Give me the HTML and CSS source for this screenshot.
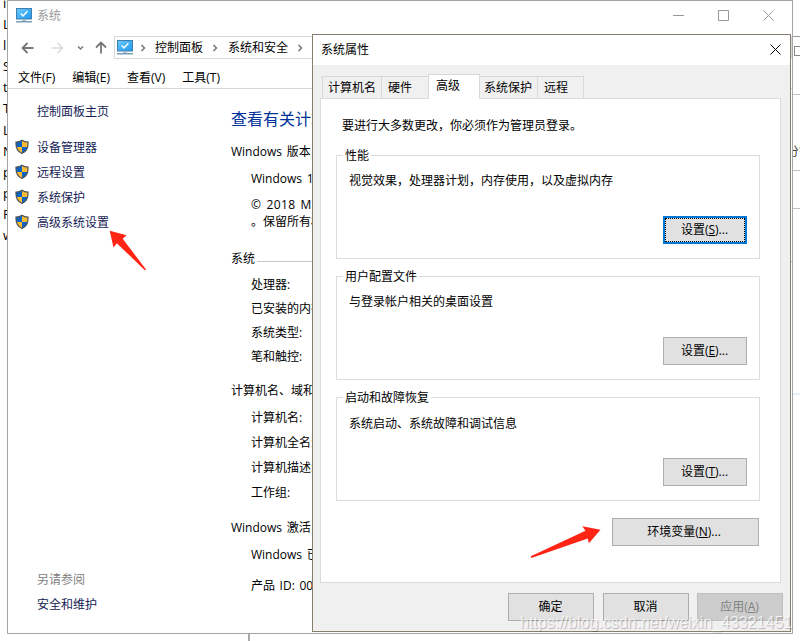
FILE: index.html
```html
<!DOCTYPE html>
<html lang="zh-CN">
<head>
  <meta charset="UTF-8" />
  <meta name="viewport" content="width=device-width, initial-scale=1.0" />
  <title>系统</title>
  <link rel="stylesheet" href="styles.css">
</head>
<body>
  <!-- icons -->
  <svg class="defs" width="0" height="0">
    <defs>
      <linearGradient id="screen" x1="0" y1="0" x2="1" y2="1">
        <stop offset="0" stop-color="#6cc9fb" />
        <stop offset="1" stop-color="#1c98ee" />
      </linearGradient>
      <symbol id="monitor" viewBox="0 0 16 15">
        <rect x="0.5" y="0.5" width="15" height="10.5" fill="url(#screen)" stroke="#3f7fb0" />
        <path d="M4.8 5.6l2.2 2.3 4.4-4.6" fill="none" stroke="#fff" stroke-width="1.5" />
        <path d="M6 11.5h4v1.5H6z" fill="#a8bccb" />
        <path d="M0 13h16v1.5H0z" fill="#7d9db5" />
      </symbol>
      <clipPath id="shield-clip">
        <path d="M7 1.2C8.7 2.5 10.7 3 13 3.1c.3 5.5-.9 9.4-6 11.4C1.9 12.5.7 8.6 1 3.1 3.3 3 5.3 2.5 7 1.2z" />
      </clipPath>
      <symbol id="shield" viewBox="0 0 14 16">
        <g clip-path="url(#shield-clip)">
          <path d="M0 0h7v8H0z" fill="#0b63c4" />
          <path d="M7 0h7v8H7z" fill="#fdbb33" />
          <path d="M0 8h7v8H0z" fill="#fdbb33" />
          <path d="M7 8h7v8H7z" fill="#0b63c4" />
        </g>
        <path d="M7 1.2C8.7 2.5 10.7 3 13 3.1c.3 5.5-.9 9.4-6 11.4C1.9 12.5.7 8.6 1 3.1 3.3 3 5.3 2.5 7 1.2z" fill="none" stroke="#4c5459" stroke-width="1.2" />
      </symbol>
      <symbol id="chevron" viewBox="0 0 6 8">
        <path d="M1.5 1l3 3-3 3" fill="none" stroke="#777" stroke-width="1.5" />
      </symbol>
      <symbol id="close" viewBox="0 0 11 11">
        <path d="M.5.5l10 10M10.5.5l-10 10" fill="none" stroke="currentColor" />
      </symbol>
    </defs>
  </svg>

  <!-- document behind the windows -->
  <div class="backdrop-left">
    <p>in</p><p>L</p><p>li</p><p>S</p><p>t</p><p>T</p><p>L</p><p>N</p><p>p</p><p>p</p><p>R</p><p>w</p>
  </div>
  <div class="backdrop-right">
    <div class="strip strip-top"></div>
    <div class="strip strip-tools"><i></i></div>
    <div class="strip strip-head"></div>
    <div class="strip strip-text">分钟</div>
    <div class="strip strip-blank"></div>
    <div class="strip strip-mark"></div>
  </div>
  <div class="backdrop-bottom"></div>

  <div class="window">
    <header class="titlebar">
      <svg width="16" height="15"><use href="#monitor" /></svg>
      <span class="title">系统</span>
      <div class="controls">
        <svg width="11" height="11"><path d="M0 5.5h11" stroke="#999" /></svg>
        <svg width="11" height="11"><path d="M.5.5h10v10H.5z" fill="none" stroke="#999" /></svg>
        <svg width="11" height="11"><use href="#close" /></svg>
      </div>
    </header>

    <nav class="navbar">
      <svg class="back" width="13" height="12" viewBox="0 0 13 12"><path d="M12.5 6H1.5M6.5 1l-5 5 5 5" fill="none" stroke="#777" stroke-width="1.8" /></svg>
      <svg class="forward" width="13" height="12" viewBox="0 0 13 12"><path d="M.5 6h11M6.500 1l5 5-5 5" fill="none" stroke="#ddd" stroke-width="1.6" /></svg>
      <svg class="recent" width="7" height="6" viewBox="0 0 7 6"><path d="M1 1.5L3.5 4 6 1.5" fill="none" stroke="#777" stroke-width="1.5" /></svg>
      <svg class="up" width="12" height="13" viewBox="0 0 12 13"><path d="M6 12.5v-11M1 6.500l5-5 5 5" fill="none" stroke="#777" stroke-width="1.8" /></svg>
      <div class="address">
        <svg width="16" height="15"><use href="#monitor" /></svg>
        <svg class="sep" width="6" height="8"><use href="#chevron" /></svg>
        <span>控制面板</span>
        <svg class="sep" width="6" height="8"><use href="#chevron" /></svg>
        <span>系统和安全</span>
        <svg class="sep" width="6" height="8"><use href="#chevron" /></svg>
      </div>
    </nav>

    <div class="menubar">
      <span>文件(F)</span>
      <span>编辑(E)</span>
      <span>查看(V)</span>
      <span>工具(T)</span>
    </div>

    <div class="content">
      <aside class="sidebar">
        <a class="home">控制面板主页</a>
        <ul>
          <li><svg width="14" height="16"><use href="#shield" /></svg>设备管理器</li>
          <li><svg width="14" height="16"><use href="#shield" /></svg>远程设置</li>
          <li><svg width="14" height="16"><use href="#shield" /></svg>系统保护</li>
          <li><svg width="14" height="16"><use href="#shield" /></svg>高级系统设置</li>
        </ul>
        <div class="see-also">
          <p>另请参阅</p>
          <a>安全和维护</a>
        </div>
      </aside>

      <main class="info">
        <h1>查看有关计算机</h1>
        <section class="edition">
          <h2>Windows 版本</h2>
          <p>Windows 10</p>
          <p class="copy"><span>© 2018 Mi</span><br>。保留所有权</p>
        </section>
        <section class="system">
          <h2 class="ruled">系统</h2>
          <p>处理器:</p>
          <p>已安装的内存</p>
          <p>系统类型:</p>
          <p>笔和触控:</p>
        </section>
        <section class="computer">
          <h2>计算机名、域和</h2>
          <p>计算机名:</p>
          <p>计算机全名:</p>
          <p>计算机描述:</p>
          <p>工作组:</p>
        </section>
        <section class="activation">
          <h2>Windows 激活</h2>
          <p>Windows 已</p>
          <p>产品 ID: 00</p>
        </section>
      </main>
    </div>
  </div>

  <div class="dialog">
    <header class="dialog-title">
      <span>系统属性</span>
      <svg width="11" height="11"><use href="#close" /></svg>
    </header>

    <div class="dialog-body">
      <div class="tabs">
        <span class="tab tab-name">计算机名</span>
        <span class="tab tab-hardware">硬件</span>
        <span class="tab tab-advanced active">高级</span>
        <span class="tab tab-protect">系统保护</span>
        <span class="tab tab-remote">远程</span>
      </div>

      <div class="panel">
        <p class="notice">要进行大多数更改，你必须作为管理员登录。</p>
        <div class="group">
          <span class="legend">性能</span>
          <p>视觉效果，处理器计划，内存使用，以及虚拟内存</p>
          <button class="btn focused">设置(<u>S</u>)...</button>
        </div>
        <div class="group">
          <span class="legend">用户配置文件</span>
          <p>与登录帐户相关的桌面设置</p>
          <button class="btn">设置(<u>E</u>)...</button>
        </div>
        <div class="group startup">
          <span class="legend">启动和故障恢复</span>
          <p>系统启动、系统故障和调试信息</p>
          <button class="btn">设置(<u>T</u>)...</button>
        </div>
        <button class="btn env">环境变量(<u>N</u>)...</button>
      </div>

      <footer class="actions">
        <button class="btn ok">确定</button>
        <button class="btn">取消</button>
        <button class="btn" disabled>应用(<u>A</u>)</button>
      </footer>
    </div>
  </div>

  <!-- red pointers -->
  <svg class="marks" width="800" height="641">
    <path d="M109.700 230.700L126.500 235.200 122.700 238.700 146.200 269.800 144.600 269.900 116.800 243.200 113.500 247.600z" fill="#ff2414" />
    <path d="M600.500 529.800L582.300 526.200 585.500 530.700 530.800 556.300 531.300 558 587.800 538.600 588.900 543.300z" fill="#ff2414" />
  </svg>
  <div class="watermark">https://blog.csdn.net/weixin_43321451</div>
</body>
</html>
```
FILE: styles.css
```css
* {
  box-sizing: border-box;
  margin: 0;
  padding: 0;
}

body {
  position: relative;
  width: 800px;
  height: 641px;
  overflow: hidden;
  background: #fff;
  color: #000;
  font-family: "Open Sans", "Noto Sans CJK SC", sans-serif;
  font-size: 12px;
  line-height: 18px;
}

svg {
  display: block;
  flex: none;
}

.defs {
  position: absolute;
}

/* background document */
.backdrop-left {
  position: absolute;
  left: 3px;
  top: -7px;
  width: 12px;
  font-size: 13px;
  line-height: 21.1px;
}

.backdrop-right {
  position: absolute;
  left: 792px;
  top: 0;
  width: 8px;
  overflow: hidden;
}

.strip {
  border-bottom: 1px solid #c0c0c0;
}

.strip-top {
  height: 37px;
  border-color: #999;
}

.strip-tools {
  height: 58px;
  padding: 9px 0 0 2px;
}

.strip-tools i {
  display: block;
  width: 10px;
  height: 10px;
  border: 1px solid #888;
}

.strip-head {
  height: 50px;
  border: none;
}

.strip-text {
  height: 26px;
  margin-left: -5px;
  color: #444;
  white-space: nowrap;
  line-height: 13px;
}

.strip-blank {
  height: 38px;
}

.strip-mark {
  height: 186px;
  border-bottom: 2px solid #e3efff;
}

.backdrop-bottom {
  position: absolute;
  left: 248px;
  top: 634px;
  width: 2px;
  height: 7px;
  background: #aaa;
}

/* system window */
.window {
  position: absolute;
  left: 7px;
  top: 0;
  width: 786px;
  height: 634px;
  display: flex;
  flex-direction: column;
  background: #fff;
  border: 1px solid #a5a5a5;
}

.titlebar {
  display: flex;
  align-items: center;
  height: 29px;
  padding: 0 18px 0 8px;
}

.title {
  margin-left: 5px;
  color: #999;
}

.controls {
  display: flex;
  gap: 34px;
  margin-left: auto;
  color: #999;
}

.navbar {
  display: flex;
  align-items: center;
  height: 35px;
  padding-left: 13px;
}

.forward {
  margin-left: 17px;
}

.recent {
  margin-left: 13px;
}

.up {
  margin-left: 11px;
}

.address {
  flex: 1;
  display: flex;
  align-items: center;
  height: 23px;
  margin-left: 7px;
  padding-left: 2px;
  border: 1px solid #d9d9d9;
}

.sep {
  margin: 0 9px 0 7px;
}

span + .sep {
  margin: 0 10px 0 9px;
}

.menubar {
  display: flex;
  gap: 17px;
  height: 24px;
  padding: 4px 0 0 10px;
  border-bottom: 1px solid #d5d5d5;
}

.content {
  flex: 1;
  display: flex;
}

.sidebar {
  display: flex;
  flex-direction: column;
  width: 223px;
  padding: 14px 0 16px 29px;
  color: #151c55;
}

.sidebar ul {
  margin: 14px 0 0 -22px;
  list-style: none;
}

.sidebar li {
  display: flex;
  align-items: center;
  gap: 8px;
  height: 25px;
}

.sidebar li svg {
  margin-top: -2px;
}

.see-also {
  margin-top: auto;
  line-height: 25px;
}

.see-also p {
  color: #808080;
}

.info {
  flex: 1;
  padding-top: 18px;
  white-space: nowrap;
  word-spacing: 1.5px;
}

.info h1 {
  color: #003399;
  font-size: 16px;
  font-weight: 400;
  line-height: 24px;
}

.info h2 {
  font-size: 12px;
  font-weight: 400;
}

.info p {
  padding-left: 20px;
  line-height: 24px;
}

.edition {
  margin-top: 12px;
}

.edition h2 {
  margin-bottom: 6px;
}

.info .copy {
  margin-top: 5px;
  line-height: 17px;
}

.copy span {
  letter-spacing: 0.4px;
}

.system {
  margin-top: 20px;
}

.ruled {
  display: flex;
  align-items: center;
  gap: 2px;
  margin-bottom: 5px;
}

.ruled::after {
  content: "";
  flex: 1;
  height: 1px;
  margin-top: 4px;
  background: #c8c8c8;
}

.computer {
  margin-top: 13px;
}

.computer h2 {
  margin-bottom: 5px;
}

.computer p {
  line-height: 25px;
}

.activation {
  margin-top: 14px;
}

.activation h2 {
  margin-bottom: 6px;
}

.activation p + p {
  margin-top: 7px;
}

/* system properties dialog */
.dialog {
  position: absolute;
  left: 312px;
  top: 34px;
  width: 479px;
  height: 598px;
  background: #f0f0f0;
  border: 1px solid #857f6b;
}

.dialog-title {
  display: flex;
  align-items: center;
  justify-content: space-between;
  height: 30px;
  padding: 0 9px 0 8px;
  background: #fff;
}

.dialog-title svg {
  margin-top: -2px;
}

.dialog-body {
  padding: 9px 7px 0;
}

.tabs {
  display: flex;
  align-items: flex-end;
  padding-left: 2px;
}

.tab {
  height: 22px;
  padding: 2px 0 0 5px;
  border: 1px solid #d9d9d9;
  border-width: 1px 1px 0 0;
}

.tab-name {
  width: 60px;
  border-left-width: 1px;
}

.tab-hardware {
  width: 46px;
  padding-left: 6px;
  border-right: none;
}

.tab-advanced {
  width: 52px;
}

.tab-protect {
  width: 58px;
  padding-left: 4px;
}

.tab-remote {
  width: 46px;
  padding-left: 6px;
}

.tab.active {
  height: 25px;
  margin-bottom: -1px;
  padding: 2px 0 0 7px;
  background: #fff;
  border-left-width: 1px;
  position: relative;
}

.panel {
  display: flex;
  flex-direction: column;
  width: 461px;
  height: 485px;
  padding: 18px 20px 0 15px;
  background: #fff;
  border: 1px solid #dcdcdc;
}

.notice {
  margin: 0 0 20px 6px;
}

.group {
  display: flex;
  flex-direction: column;
  height: 104px;
  margin-bottom: 17px;
  padding: 0 12px 14px;
  border: 1px solid #dcdcdc;
}

.legend {
  align-self: flex-start;
  margin: -9px 0 7px -6px;
  padding: 0 2px;
  background: #fff;
}

.startup .legend {
  margin-bottom: 8px;
}

.group .btn {
  align-self: flex-end;
  width: 84px;
  margin-top: auto;
}

.btn {
  height: 28px;
  padding-right: 1px;
  background: #e1e1e1;
  border: 1px solid #adadad;
  color: #000;
  font: inherit;
}

.btn:disabled {
  background: #ccc;
  border-color: #bfbfbf;
  color: #838383;
}

.btn.focused {
  border: 2px solid #0078d7;
  outline: 1px dotted #000;
  outline-offset: -3px;
}

.env {
  align-self: flex-end;
  width: 147px;
  margin-right: 1px;
  padding-right: 3px;
}

.actions {
  display: flex;
  justify-content: flex-end;
  gap: 8px;
  padding-top: 10px;
}

.actions .btn {
  width: 86px;
}

.actions .ok {
  margin-right: 1px;
}

.marks {
  position: absolute;
  left: 0;
  top: 0;
}

.watermark {
  position: absolute;
  left: 520px;
  top: 613px;
  color: rgba(255, 255, 255, 0.75);
  font-family: "Liberation Sans", sans-serif;
  font-size: 16px;
  line-height: 20px;
  text-shadow: 1px 1px 1px rgba(0, 0, 0, 0.25);
  white-space: nowrap;
}
```
